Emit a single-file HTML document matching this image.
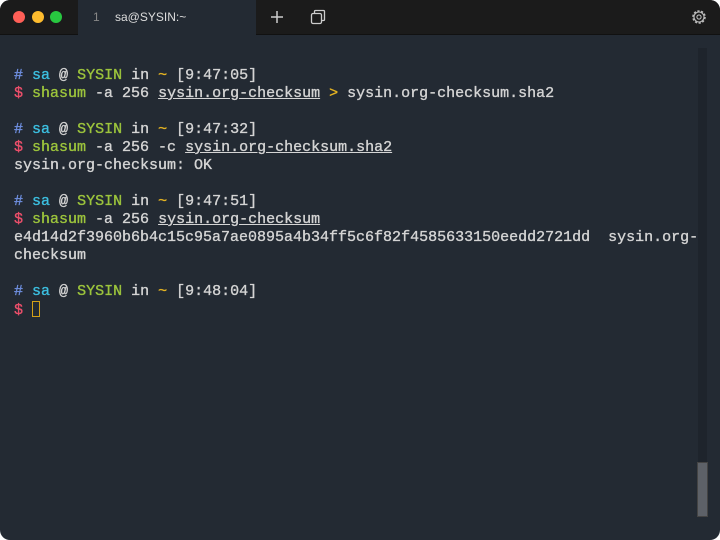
<!DOCTYPE html>
<html><head><style>
body{margin:0;width:720px;height:540px;background:#fff;overflow:hidden;font-family:"Liberation Sans",sans-serif}
.win{position:absolute;left:0;top:0;width:720px;height:540px;border-radius:10px;overflow:hidden;background:#232a33}
.bar{position:absolute;left:0;top:0;width:720px;height:34px;background:#1b1b1b;border-bottom:1px solid #111}
.dot{position:absolute;top:11px;width:12px;height:12px;border-radius:50%}
.tab{position:absolute;left:78px;top:0;width:178px;height:35px;background:#232a33}
.term{position:absolute;left:14px;top:67px;font-family:"Liberation Mono",monospace;font-size:15px;line-height:18px;color:#d4d4d4;white-space:pre;-webkit-text-stroke:0.35px}
.b{color:#6f8fe0}.c{color:#3cbfe0}.g{color:#9cc43c}.y{color:#e6b422}.r{color:#ec4f6b}.u{text-decoration:underline}
</style></head><body><div class="win">
<div class="bar">
<div class="dot" style="left:13px;background:#ff5f57"></div>
<div class="dot" style="left:32px;background:#febc2e"></div>
<div class="dot" style="left:50px;background:#28c840"></div>
<div class="tab"><span style="position:absolute;left:15px;top:10px;font-size:12px;color:#888">1</span><span style="position:absolute;left:37px;top:10px;font-size:12px;color:#ddd">sa@SYSIN:~</span></div>
<svg style="position:absolute;left:270px;top:10px" width="14" height="14"><path d="M7 1V13M1 7H13" stroke="#ccc" stroke-width="1.5"/></svg>
<svg style="position:absolute;left:310px;top:9px" width="16" height="16"><rect x="1.5" y="4.5" width="10" height="10" rx="1.5" fill="none" stroke="#ccc" stroke-width="1.3"/><path d="M4.5 4.5V2.5a1 1 0 0 1 1-1H13.5a1 1 0 0 1 1 1V10.5a1 1 0 0 1-1 1H11.5" fill="none" stroke="#ccc" stroke-width="1.3"/></svg>
<svg style="position:absolute;left:690px;top:8px" width="18" height="18" viewBox="0 0 18 18"><circle cx="9" cy="9" r="5.5" fill="none" stroke="#bbb" stroke-width="2.6" stroke-dasharray="2 1.46"/><circle cx="9" cy="9" r="5" fill="#1b1b1b" stroke="#bbb" stroke-width="1.1"/><circle cx="9" cy="9" r="2.1" fill="none" stroke="#bbb" stroke-width="1.1"/></svg>
</div>
<div style="position:absolute;left:698px;top:48px;width:9px;height:468px;background:#1e242c"></div>
<div style="position:absolute;left:697px;top:462px;width:9px;height:53px;background:#5d6168;border:1px solid #444"></div>
<div class="term"><span class="b">#</span> <span class="c">sa</span> @ <span class="g">SYSIN</span> in <span class="y">~</span> [9:47:05]
<span class="r">$</span> <span class="g">shasum</span> -a 256 <span class="u">sysin.org-checksum</span> <span class="y">&gt;</span> sysin.org-checksum.sha2

<span class="b">#</span> <span class="c">sa</span> @ <span class="g">SYSIN</span> in <span class="y">~</span> [9:47:32]
<span class="r">$</span> <span class="g">shasum</span> -a 256 -c <span class="u">sysin.org-checksum.sha2</span>
sysin.org-checksum: OK

<span class="b">#</span> <span class="c">sa</span> @ <span class="g">SYSIN</span> in <span class="y">~</span> [9:47:51]
<span class="r">$</span> <span class="g">shasum</span> -a 256 <span class="u">sysin.org-checksum</span>
e4d14d2f3960b6b4c15c95a7ae0895a4b34ff5c6f82f4585633150eedd2721dd  sysin.org-
checksum

<span class="b">#</span> <span class="c">sa</span> @ <span class="g">SYSIN</span> in <span class="y">~</span> [9:48:04]
<span class="r">$</span> <span style="display:inline-block;width:8px;height:16px;border:1px solid #d4a017;box-sizing:border-box;vertical-align:-3px"></span></div>
</div></body></html>
